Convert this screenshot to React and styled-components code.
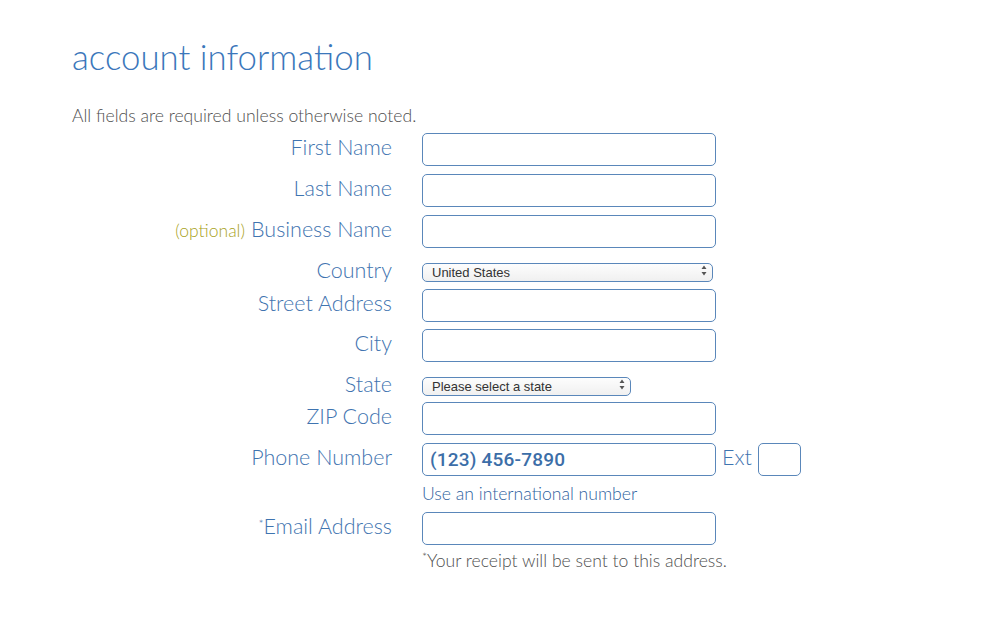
import styled, { createGlobalStyle } from 'styled-components'

const Global = createGlobalStyle`
  html, body {
    margin: 0;
    background: #fff;
  }
  body {
    font-family: Lato, "Open Sans", sans-serif;
  }
`

const Page = styled.div`
  width: 1000px;
  height: 640px;
  box-sizing: border-box;
  padding: 35px 0 0 72px;
  overflow: hidden;
`
const Title = styled.h1`
  margin: 0;
  font-family: Lato, sans-serif;
  font-weight: 300;
  font-size: 34.8px;
  line-height: 44px;
  color: #3b77bb;
`
const Note = styled.p`
  margin: 26px 0 6px;
  font-family: Lato, sans-serif;
  font-weight: 300;
  font-size: 17.6px;
  line-height: 22px;
  color: #4f4f4f;
`
const Form = styled.form`
  display: flex;
  flex-direction: column;
`
const Row = styled.div`
  display: flex;
  align-items: flex-start;
  gap: 30px;
  margin-bottom: ${p => (p.$gap ?? 8)}px;
`
const Label = styled.label`
  width: 320px;
  text-align: right;
  font-family: Lato, sans-serif;
  font-weight: 300;
  font-size: 21.5px;
  line-height: 26px;
  padding-top: 1px;
  color: #3f74b0;
  white-space: nowrap;
`
const Optional = styled.span`
  font-size: 17.5px;
  color: #a9a21c;
  margin-right: 6px;
`
const Star = styled.sup`
  font-size: 12px;
  vertical-align: 6px;
  line-height: 0;
`
const Input = styled.input`
  box-sizing: border-box;
  width: ${p => p.$w || 294}px;
  height: 33px;
  border: 1.5px solid #5a87ba;
  border-radius: 5px;
  padding: 0 7px;
  background: #fff;
  font-family: Roboto, "Liberation Sans", Arial, sans-serif;
  font-weight: 500;
  font-size: 19px;
  letter-spacing: 0.2px;
  color: #3c6ea8;
  outline: none;
`
const SelectWrap = styled.div`
  position: relative;
  width: ${p => p.$w}px;
  height: 19px;
  margin-top: 5px;
`
const Select = styled.select`
  appearance: none;
  box-sizing: border-box;
  width: 100%;
  height: 19px;
  border: 1.5px solid #5a87ba;
  border-radius: 5px;
  padding: 0 0 0 9px;
  background: linear-gradient(#fdfdfd, #f0f0f0);
  font-family: "Liberation Sans", Arial, sans-serif;
  font-size: 13px;
  color: #333;
  outline: none;
`
const Arrows = styled.svg`
  position: absolute;
  right: 6px;
  top: 4px;
  pointer-events: none;
`
const Ext = styled.span`
  font-family: Lato, sans-serif;
  font-weight: 300;
  font-size: 21.5px;
  line-height: 26px;
  color: #3f74b0;
  margin: 0 -24px;
  padding-top: 1px;
`
const Help = styled.div`
  margin: ${p => p.$top || 0}px 0 ${p => p.$bottom || 0}px 350px;
  font-family: Lato, sans-serif;
  font-weight: 300;
  font-size: 17.6px;
  line-height: 22px;
  color: ${p => (p.$muted ? '#4f4f4f' : '#2f62a0')};
`

function SelectField({ width, value }) {
  return (
    <SelectWrap $w={width}>
      <Select defaultValue={value}>
        <option>{value}</option>
      </Select>
      <Arrows width="6" height="11" viewBox="0 0 6 11">
        <path d="M3 0.5 L5.5 4 H0.5 Z M3 10.5 L5.5 7 H0.5 Z" fill="#555" />
      </Arrows>
    </SelectWrap>
  )
}

export default function App() {
  return (
    <Page>
      <Global />
      <Title>account information</Title>
      <Note>All fields are required unless otherwise noted.</Note>
      <Form>
        <Row>
          <Label>First Name</Label>
          <Input />
        </Row>
        <Row>
          <Label>Last Name</Label>
          <Input />
        </Row>
        <Row>
          <Label><Optional>(optional)</Optional>Business Name</Label>
          <Input />
        </Row>
        <Row $gap={6}>
          <Label>Country</Label>
          <SelectField width={291} value="United States" />
        </Row>
        <Row $gap={7}>
          <Label>Street Address</Label>
          <Input />
        </Row>
        <Row>
          <Label>City</Label>
          <Input />
        </Row>
        <Row $gap={5}>
          <Label>State</Label>
          <SelectField width={209} value="Please select a state" />
        </Row>
        <Row>
          <Label>ZIP Code</Label>
          <Input />
        </Row>
        <Row $gap={0}>
          <Label>Phone Number</Label>
          <Input defaultValue="(123) 456-7890" />
          <Ext>Ext</Ext>
          <Input $w={43} />
        </Row>
        <Help $top={7} $bottom={7}>Use an international number</Help>
        <Row $gap={0}>
          <Label><Star>*</Star>Email Address</Label>
          <Input />
        </Row>
        <Help $muted $top={5}><Star>*</Star>Your receipt will be sent to this address.</Help>
      </Form>
    </Page>
  )
}
